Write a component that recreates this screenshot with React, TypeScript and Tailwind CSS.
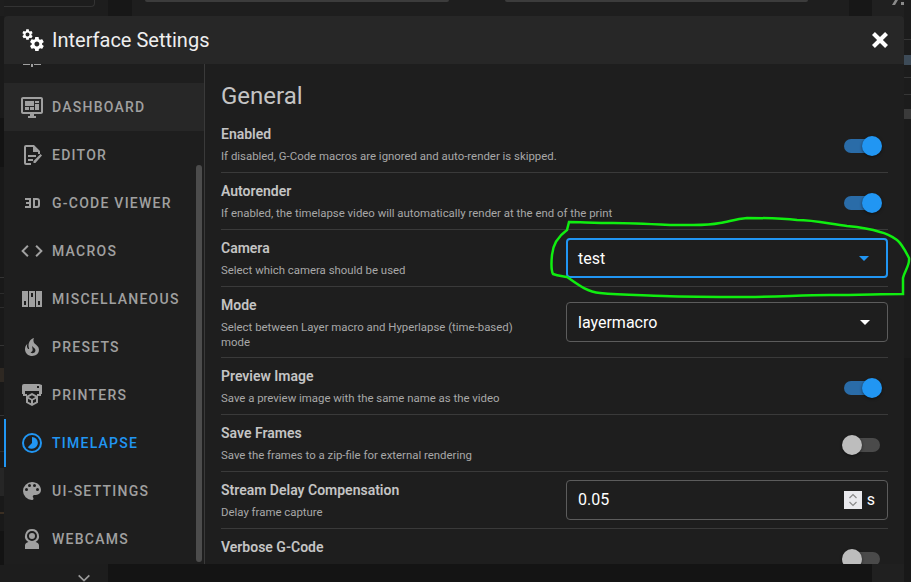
import { ReactNode } from "react";

const navItems = [
  { label: "", icon: "console" },
  { label: "Dashboard", icon: "dashboard" },
  { label: "Editor", icon: "editor" },
  { label: "G-Code Viewer", icon: "3d" },
  { label: "Macros", icon: "macros" },
  { label: "Miscellaneous", icon: "misc" },
  { label: "Presets", icon: "presets" },
  { label: "Printers", icon: "printers" },
  { label: "Timelapse", icon: "timelapse", active: true },
  { label: "UI-Settings", icon: "ui" },
  { label: "Webcams", icon: "webcams" },
];

// what shows of the page behind the dialog, along the left edge
const leftSliver = [
  { h: 16, bg: "#1e1e1e" },
  { h: 102, bg: "#1a1a1a" },
  { h: 49, bg: "#131313" },
  { h: 110, bg: "#191919" },
  { h: 1, bg: "#333333" },
  { h: 15, bg: "#191919" },
  { h: 1, bg: "#2c2c2c" },
  { h: 13, bg: "#191919" },
  { h: 1, bg: "#2c2c2c" },
  { h: 37, bg: "#191919" },
  { h: 1, bg: "#333333" },
  { h: 22, bg: "#191919" },
  { h: 14, bg: "#2e2822" },
  { h: 33, bg: "#191919" },
  { h: 1, bg: "#333333" },
  { h: 35, bg: "#191919" },
  { h: 1, bg: "#2c2c2c" },
  { h: 16, bg: "#191919" },
  { h: 28, bg: "#262626" },
  { h: 16, bg: "#191919" },
  { h: 2, bg: "#3a2e22" },
  { h: 17, bg: "#191919" },
  { h: 34, bg: "#131313" },
  { h: 52, bg: "#1d1d1d" },
];

const rightSliver = [
  { h: 39, bg: "#1c1c1c" },
  { h: 1, bg: "#363636" },
  { h: 15, bg: "#1c1c1c" },
  { h: 10, bg: "#3d4b58" },
  { h: 12, bg: "#1c1c1c" },
  { h: 1, bg: "#363636" },
  { h: 16, bg: "#1c1c1c" },
  { h: 1, bg: "#363636" },
  { h: 14, bg: "#1c1c1c" },
  { h: 10, bg: "#3a3a3a" },
  { h: 239, bg: "#1b1b1b" },
  { h: 224, bg: "#181818" },
];

function NavIcon({ name }: { name: string }) {
  const props = { viewBox: "0 0 24 24", fill: "currentColor", className: "h-6 w-6 shrink-0" };
  switch (name) {
    case "console":
      return (
        <svg {...props}>
          <path d="M3 16h7v2H3zM14 16h7v2h-7zM11 16h2v4h-2z" />
        </svg>
      );
    case "dashboard":
      return (
        <svg {...props}>
          <path d="M21 2H3C1.900 2 1 2.900 1 4v13c0 1.100.9 2 2 2h7v2H8v2h8v-2h-2v-2h7c1.100 0 2-.9 2-2V4c0-1.100-.9-2-2-2Zm0 15H3V4h18v13ZM5 6h9v5H5V6Zm10 0h4v2h-4V6Zm0 3h4v6h-4V9ZM5 12h4v3H5v-3Zm5 0h4v3h-4v-3Z" />
        </svg>
      );
    case "editor":
      return (
        <svg {...props}>
          <path d="M6 2a2 2 0 0 0-2 2v16a2 2 0 0 0 2 2h5v-2H6V4h7v5h5v2h2V8l-6-6H6Zm2 10v2h8v-2H8Zm0 4v2h5v-2H8Zm14-3.500-1.500-1.500-7 7V20h1.900l6.600-7.500Z" />
        </svg>
      );
    case "3d":
      return (
        <svg {...props}>
          <path d="M5 7h6v10H5v-2h4v-2H6v-2h3V9H5V7Zm8 0h4a3 3 0 0 1 3 3v4a3 3 0 0 1-3 3h-4V7Zm2 2v6h2a1 1 0 0 0 1-1v-4a1 1 0 0 0-1-1h-2Z" />
        </svg>
      );
    case "macros":
      return (
        <svg {...props}>
          <path d="M8.600 16.600 4 12l4.600-4.600L7.200 6l-6 6 6 6 1.400-1.400Zm6.800 0L20 12l-4.600-4.600L16.800 6l6 6-6 6-1.400-1.400Z" />
        </svg>
      );
    case "misc":
      return (
        <svg {...props}>
          <path fillRule="evenodd" d="M2 4h6v16H2V4Zm2 10v4h2v-4H4Zm5-10h6v16H9V4Zm2 2v4h2V6h-2Zm5-2h6v16h-6V4Zm2 10v4h2v-4h-2Z" />
        </svg>
      );
    case "presets":
      return (
        <svg {...props}>
          <path d="M17.660 11.200c-.230-.300-.510-.560-.770-.820-.670-.600-1.430-1.030-2.070-1.660C13.330 7.260 13 4.850 13.950 3c-.950.230-1.780.750-2.490 1.320-2.590 2.080-3.610 5.750-2.390 8.900.040.100.080.200.080.330 0 .220-.150.420-.350.500-.230.100-.470.040-.660-.120a.58.580 0 0 1-.140-.170c-1.130-1.430-1.310-3.480-.550-5.120C5.780 10 4.870 12.300 5 14.470c.060.500.120 1 .290 1.500.140.600.410 1.200.710 1.730 1.080 1.730 2.950 2.970 4.960 3.220 2.140.270 4.430-.120 6.070-1.600 1.830-1.660 2.470-4.320 1.530-6.600l-.130-.260c-.210-.460-.770-1.260-.770-1.260Zm-3.160 6.300c-.280.240-.740.500-1.100.600-1.120.400-2.240-.160-2.900-.820 1.190-.280 1.900-1.160 2.110-2.050.170-.800-.150-1.460-.280-2.230-.120-.740-.100-1.370.170-2.060.190.380.390.760.630 1.060.770 1 1.980 1.440 2.240 2.800.040.140.060.280.060.430.030.820-.330 1.720-.930 2.270Z" />
        </svg>
      );
    case "printers":
      return (
        <svg {...props}>
          <path fillRule="evenodd" d="M4 1h15l3 1v9h-3V8H5v3H2V3a2 2 0 0 1 2-2Zm13 2v2h2V3h-2ZM3 11h4v2H3v-2Zm14 0h4v2h-4v-2ZM12 10l6 3.200v6.600L12 23l-6-3.200v-6.600L12 10Zm0 2.300-3.400 1.800 3.400 1.800 3.400-1.800-3.400-1.800Zm-4 3.400v3l3 1.600v-3l-3-1.600Zm8 0-3 1.600v3l3-1.600v-3Z" />
        </svg>
      );
    case "timelapse":
      return (
        <svg {...props}>
          <path fillRule="evenodd" d="M12 2a10 10 0 1 0 0 20 10 10 0 0 0 0-20Zm0 18a8 8 0 1 1 0-16 8 8 0 0 1 0 16Zm4.240-12.240A5.980 5.980 0 0 0 12 6v6l-4.240 4.240a6 6 0 0 0 8.480-8.480Z" />
        </svg>
      );
    case "ui":
      return (
        <svg {...props}>
          <path d="M17.500 12a1.500 1.500 0 0 1-1.500-1.500A1.500 1.500 0 0 1 17.500 9a1.500 1.500 0 0 1 1.500 1.500 1.500 1.500 0 0 1-1.500 1.500Zm-3-4A1.500 1.500 0 0 1 13 6.500 1.500 1.500 0 0 1 14.500 5 1.500 1.500 0 0 1 16 6.500 1.500 1.500 0 0 1 14.500 8Zm-5 0A1.500 1.500 0 0 1 8 6.500 1.500 1.500 0 0 1 9.500 5 1.500 1.500 0 0 1 11 6.500 1.500 1.500 0 0 1 9.500 8Zm-3 4A1.500 1.500 0 0 1 5 10.500 1.500 1.500 0 0 1 6.500 9 1.500 1.500 0 0 1 8 10.500 1.500 1.500 0 0 1 6.500 12ZM12 3a9 9 0 0 0 0 18 1.500 1.500 0 0 0 1.500-1.500c0-.390-.150-.740-.390-1-.230-.270-.380-.620-.380-1a1.500 1.500 0 0 1 1.500-1.500H16a5 5 0 0 0 5-5c0-4.420-4.030-8-9-8Z" />
        </svg>
      );
    default:
      return (
        <svg {...props}>
          <path fillRule="evenodd" d="M12 2a7 7 0 0 0-3.600 13c-1.900.700-3.400 1.800-3.400 3.500V22h14v-3.500c0-1.700-1.500-2.800-3.400-3.500A7 7 0 0 0 12 2Zm0 2a5 5 0 1 1 0 10 5 5 0 0 1 0-10Zm0 2a3 3 0 1 0 0 6 3 3 0 0 0 0-6Z" />
        </svg>
      );
  }
}

function GearsIcon() {
  return (
    <svg viewBox="0 0 24 24" fill="currentColor" className="h-6 w-6">
      <path d="M15.900 18.450c1.350 0 2.450-1.100 2.450-2.450s-1.100-2.450-2.450-2.450-2.450 1.100-2.450 2.450 1.100 2.450 2.450 2.450Zm5.200-1.770 1.480 1.150c.130.110.170.300.080.450l-1.400 2.420c-.090.150-.270.210-.430.150l-1.740-.700c-.360.280-.760.510-1.180.690l-.260 1.850c-.030.170-.180.310-.350.310h-2.800c-.180 0-.330-.140-.350-.310l-.260-1.850c-.430-.180-.820-.410-1.180-.690l-1.740.700c-.160.060-.340 0-.430-.150l-1.400-2.420c-.090-.150-.050-.340.080-.450l1.480-1.150a5.600 5.600 0 0 1 0-1.360l-1.480-1.150c-.130-.110-.170-.300-.080-.450l1.400-2.420c.090-.150.270-.210.430-.150l1.740.700c.360-.280.750-.510 1.180-.690l.260-1.850c.020-.170.170-.310.350-.310h2.800c.170 0 .320.140.350.310l.260 1.850c.420.180.820.410 1.180.690l1.740-.700c.160-.060.340 0 .430.150l1.400 2.420c.090.150.050.340-.080.450l-1.480 1.150a5.600 5.600 0 0 1 0 1.360ZM6.500 8.500a2 2 0 1 0 0-4 2 2 0 0 0 0 4Zm3.900-1.400 1.100.850c.100.080.130.230.060.340l-1.050 1.820c-.070.110-.200.160-.320.110l-1.300-.520c-.270.210-.570.380-.890.520l-.190 1.390c-.020.130-.140.230-.260.230H5.450c-.130 0-.240-.100-.260-.230L5 10.220c-.320-.140-.610-.310-.880-.520l-1.310.520c-.120.050-.250 0-.320-.110L1.440 8.290c-.070-.110-.040-.260.060-.340l1.110-.850a4.200 4.200 0 0 1 0-1.020l-1.110-.860c-.100-.080-.130-.230-.060-.340l1.050-1.820c.070-.110.200-.160.320-.110l1.310.520c.270-.210.560-.380.880-.520l.190-1.390c.020-.130.130-.230.260-.230h2.100c.120 0 .240.100.260.230l.190 1.390c.320.140.620.310.890.520l1.300-.520c.120-.050.250 0 .320.110l1.050 1.820c.070.110.040.260-.060.340l-1.100.860a4.200 4.200 0 0 1 0 1.020Z" />
    </svg>
  );
}

function Row({ title, desc, children, tall }: { title: string; desc: string; children?: ReactNode; tall?: boolean }) {
  return (
    <div className={`flex items-center border-b border-[#3a3a3a] ${tall ? "h-[71px]" : "h-[57px]"}`}>
      <div className="min-w-0 flex-1">
        <div className="text-[14px] leading-[20px] font-semibold text-[#c4c4c4]">{title}</div>
        <div className="mt-[5px] min-h-[15px] whitespace-pre-line text-[11.4px] leading-[15px] text-[#a8a8a8]">{desc}</div>
      </div>
      <div className="flex shrink-0 justify-end">{children}</div>
    </div>
  );
}

function Toggle({ on }: { on?: boolean }) {
  return (
    <div className={`relative mt-1 mr-2 h-[14px] w-[36px] rounded-full ${on ? "bg-[#2a6ca8]" : "bg-[#4a4a4a]"}`}>
      <div
        className={`absolute top-[-3px] h-5 w-5 rounded-full shadow-[0_1px_3px_rgba(0,0,0,0.5)] ${on ? "right-[-2px] bg-[#2196f3]" : "left-[-2px] bg-[#bdbdbd]"}`}
      />
    </div>
  );
}

function SelectBox({ value, focus }: { value: string; focus?: boolean }) {
  return (
    <div
      className={`flex h-10 w-[322px] items-center justify-between rounded-[4px] pr-[17px] text-[16px] text-white ${
        focus ? "border-[2px] border-[#2196f3] pl-[10px]" : "border border-[#5c5c5c] pl-[11px]"
      }`}
    >
      <span className="pt-[1px]">{value}</span>
      <span className={`h-0 w-0 border-x-[5px] border-t-[5px] border-x-transparent ${focus ? "border-t-[#2196f3]" : "border-t-white"}`} />
    </div>
  );
}

export default function App() {
  return (
    <div className="relative flex h-[582px] w-[911px] overflow-hidden bg-[#141414] font-['Roboto',sans-serif]">
      {/* page behind the dialog */}
      <div className="relative w-[108px] shrink-0 bg-[#1d1d1d]">
        <div className="h-[7px] w-[95px] rounded-br-[4px] border-r border-b border-[#333333]" />
        <svg viewBox="0 0 24 24" className="absolute top-[570px] left-[76px] h-4 w-4 text-[#9a9a9a]" fill="none" stroke="currentColor" strokeWidth="2.500">
          <path d="M4 8l8 8 8-8" />
        </svg>
      </div>
      <div className="h-[564px] w-6 shrink-0 bg-[#171717]" />
      <div className="flex h-[564px] w-[717px] shrink-0 gap-[56px] bg-[#1e1e1e] pl-[13px]">
        <div className="h-[2px] w-[304px] rounded-b-[2px] bg-[#3c3c3c]" />
        <div className="h-[2px] w-[303px] rounded-b-[2px] bg-[#3c3c3c]" />
      </div>
      <div className="h-[564px] w-[23px] shrink-0 bg-[#171717]" />
      <div className="flex h-full w-[39px] shrink-0 bg-[#202020]">
        <div className="w-8">
          <svg viewBox="0 0 16 5" className="ml-[20px] h-[5px] w-4 text-[#8a8a8a]" fill="currentColor">
            <path d="M0 5 3 0h3L3 5ZM9 2h7v3H9Z" />
          </svg>
        </div>
        <div className="w-[7px] shrink-0">
          {rightSliver.map((s, i) => (
            <div key={i} style={{ height: s.h, backgroundColor: s.bg }} />
          ))}
        </div>
      </div>
      <div className="absolute top-0 left-0 w-1">
        {leftSliver.map((s, i) => (
          <div key={i} style={{ height: s.h, backgroundColor: s.bg }} />
        ))}
      </div>

      {/* dialog */}
      <div className="absolute top-4 left-1 flex h-[548px] w-[900px] flex-col overflow-hidden rounded-t-[4px] bg-[#1e1e1e]">
        <div className="flex h-12 shrink-0 items-center justify-between bg-[#272727] pl-[17px] pr-[12px] text-white">
          <div className="flex items-center gap-[7px]">
            <GearsIcon />
            <span className="text-[20px] font-normal text-[#eeeeee]">Interface Settings</span>
          </div>
          <svg viewBox="0 0 24 24" fill="currentColor" className="h-6 w-6">
            <path d="M20 6.910 17.090 4 12 9.090 6.910 4 4 6.910 9.090 12 4 17.090 6.910 20 12 14.910 17.090 20 20 17.090 14.910 12 20 6.910Z" />
          </svg>
        </div>
        <div className="flex min-h-0 flex-1">
          <aside className="relative h-full w-[201px] shrink-0 overflow-hidden border-r border-[#3a3a3a]">
            <nav className="mt-[-29px]">
              {navItems.map((item, i) => (
                <div
                  key={item.icon}
                  className={`flex h-12 items-center gap-2 text-[14px] font-medium whitespace-nowrap uppercase tracking-[1.25px] ${
                    item.active
                      ? "border-l-2 border-[#2196f3] pl-[14px] text-[#2196f3]"
                      : i === 1
                        ? "bg-[#272727] pl-4 text-[#a0a0a0]"
                        : "pl-4 text-[#a0a0a0]"
                  }`}
                >
                  <NavIcon name={item.icon} />
                  {item.label && <span>{item.label}</span>}
                </div>
              ))}
            </nav>
            <div className="absolute top-[101px] right-[2px] h-[397px] w-[6px] rounded-full bg-[#4c4c4c]" />
          </aside>
          <main className="min-w-0 flex-1 overflow-hidden px-4">
            <h2 className="flex h-[52px] items-end pb-[4px] text-[24px] leading-8 text-[#c4c4c4]">General</h2>
            <Row title="Enabled" desc="If disabled, G-Code macros are ignored and auto-render is skipped.">
              <Toggle on />
            </Row>
            <Row title="Autorender" desc="If enabled, the timelapse video will automatically render at the end of the print">
              <Toggle on />
            </Row>
            <Row title="Camera" desc="Select which camera should be used">
              <SelectBox value="test" focus />
            </Row>
            <Row tall title="Mode" desc={"Select between Layer macro and Hyperlapse (time-based)\nmode"}>
              <SelectBox value="layermacro" />
            </Row>
            <Row title="Preview Image" desc="Save a preview image with the same name as the video">
              <Toggle on />
            </Row>
            <Row title="Save Frames" desc="Save the frames to a zip-file for external rendering">
              <Toggle />
            </Row>
            <Row title="Stream Delay Compensation" desc="Delay frame capture">
              <div className="flex h-10 w-[322px] items-center rounded-[4px] border border-[#5c5c5c] pl-[11px] pr-3 text-[16px] text-white">
                <span className="flex-1">0.05</span>
                <span className="mr-[5px] flex h-[18px] w-[18px] flex-col items-center justify-center bg-[#e9e9ed] text-[#8a8a8a]">
                  <svg viewBox="0 0 10 14" className="h-[14px] w-[10px]" fill="none" stroke="currentColor" strokeWidth="1.200">
                    <path d="M1.500 5 5 1.500 8.500 5M1.500 9 5 12.500 8.500 9" />
                  </svg>
                </span>
                <span>s</span>
              </div>
            </Row>
            <Row title="Verbose G-Code" desc="">
              <Toggle />
            </Row>
          </main>
        </div>
      </div>

      {/* hand-drawn marker over the screenshot */}
      <svg className="pointer-events-none absolute inset-0 h-full w-full" viewBox="0 0 911 582" fill="none" stroke="#10ee10" strokeWidth="2.500">
        <path d="M569 222 567 230C560 235 553 243 552 255 551 265 551 270 553 274 558 276 562 276 567 277 577 284 587 292 600 293 620 295 640 295 663 296 690 297 720 297 747 297 780 297 800 295 830 295 860 295 880 294 903 294L903 278C905 270 910 265 909 258 905 250 902 244 897 240 890 235 885 233 880 232 868 228 858 227 847 226 830 224 815 220 797 220 780 218 760 218 747 218 735 219 728 222 720 223 710 225 700 225 693 225 680 225 675 225 670 225 650 224 630 223 613 223 595 223 580 222 569 222Z" />
      </svg>
    </div>
  );
}
